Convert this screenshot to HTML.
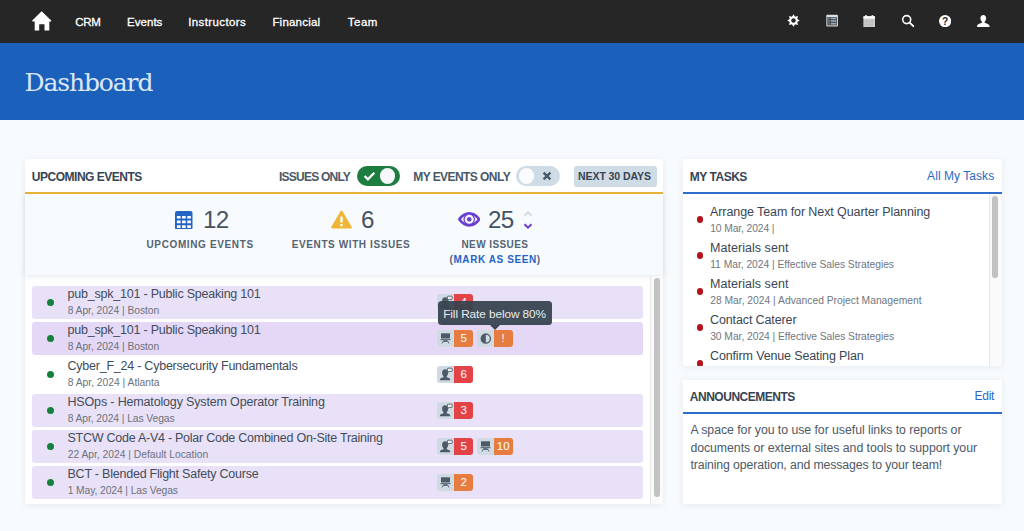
<!DOCTYPE html>
<html lang="en">
<head>
<meta charset="utf-8">
<title>Dashboard</title>
<style>
*{box-sizing:border-box;margin:0;padding:0}
html,body{width:1024px;height:531px;overflow:hidden}
body{background:#f8fbfd;font-family:"Liberation Sans",sans-serif;color:#2d3748;position:relative}
.abs,.x{position:absolute;white-space:nowrap}
svg{display:block}
#nav{position:absolute;left:0;top:0;width:1024px;height:43px;background:#262626}
#nav .item{position:absolute;top:15px;font-size:11.500px;line-height:14px;color:#fff;white-space:nowrap;-webkit-text-stroke:.3px #fff}
#nav svg{position:absolute}
#hero{position:absolute;left:0;top:43px;width:1024px;height:77px;background:#1b61bc}
#hero h1{position:absolute;left:24.500px;top:23px;font-family:"DejaVu Serif","Liberation Serif",serif;font-weight:normal;font-size:25px;line-height:34px;color:#dde8f7;white-space:nowrap}
.card{position:absolute;background:#fff;box-shadow:0 1px 7px rgba(60,100,150,.11);border-radius:2px}
.hd{position:absolute;left:0;top:0;right:0;height:34.500px;border-bottom:2px solid #2e6dca}
.ttl{position:absolute;top:10.500px;font-size:12px;line-height:14px;font-weight:bold;color:#364454;white-space:nowrap}
.ttl.l{color:#485868}
.lnk{position:absolute;top:9.500px;font-size:12px;line-height:15px;color:#2a69c6;white-space:nowrap}
#ev .hd{border-bottom-color:#efb636}
#stats{position:absolute;left:0;top:35px;width:638px;height:81px;background:#f8fbfd;box-shadow:0 1px 5px rgba(60,90,130,.16)}
.num{position:absolute;top:11.800px;font-size:24.200px;line-height:28px;color:#465362;white-space:nowrap}
.stl{position:absolute;font-size:10px;line-height:13px;font-weight:bold;color:#556373;white-space:nowrap}
.row{position:absolute;left:7px;width:611px;height:32.500px;background:#e9e1f8;border-radius:3px}
.row.hov{background:#e4d8f6}
.row.wh{background:#fff}
.row .dot{position:absolute;left:15px;top:13px;width:7px;height:7px;border-radius:50%;background:#15803d}
.row .t{position:absolute;left:35.500px;top:0px;font-size:12.500px;line-height:16px;color:#414d59;white-space:nowrap}
.row .s{position:absolute;left:35.700px;top:18.300px;font-size:10.300px;line-height:13px;color:#6c727c;white-space:nowrap}
.bdg{position:absolute;top:8px;height:17px;width:36px;border-radius:3px;overflow:hidden;background:#cfdae2}
.bdg .n{position:absolute;left:17.200px;top:0;right:0;height:17px;color:#fff;font-size:11.500px;line-height:17px;text-align:center}
.bdg .n.r{background:#e14347}
.bdg .n.o{background:#e67c40}
.bdg svg{position:absolute;left:0;top:0}
.task{position:absolute;left:0;width:300px;height:36px}
.task .dot{position:absolute;left:13.700px;top:12.200px;width:6.600px;height:6.600px;border-radius:50%;background:#b3151b}
.task .t{position:absolute;left:27px;top:0;font-size:12.500px;line-height:16px;color:#3a4654;white-space:nowrap}
.task .s{position:absolute;left:27.200px;top:18.200px;font-size:10.300px;line-height:13px;color:#6f7782;white-space:nowrap}
.ann{position:absolute;left:7.400px;font-size:12.300px;line-height:17px;color:#4d5966;white-space:nowrap}
#n1{letter-spacing:-0.334px}
#n2{letter-spacing:0.021px}
#n3{letter-spacing:0.383px}
#n4{letter-spacing:0.208px}
#n5{letter-spacing:0.494px}
#h1{letter-spacing:-1.111px}
#t1{letter-spacing:-0.484px}
#t2{letter-spacing:-0.772px}
#t3{letter-spacing:-0.557px}
#t4{letter-spacing:-0.070px}
#s1{letter-spacing:-0.803px}
#s2{letter-spacing:-2.253px}
#s3{letter-spacing:-0.803px}
#l1{letter-spacing:0.627px}
#l2{letter-spacing:0.595px}
#l3{letter-spacing:0.400px}
#l4{letter-spacing:0.586px}
#rt0{letter-spacing:-0.214px}
#rs0{letter-spacing:-0.053px}
#rt1{letter-spacing:-0.214px}
#rs1{letter-spacing:-0.053px}
#rt2{letter-spacing:-0.233px}
#rs2{letter-spacing:-0.005px}
#rt3{letter-spacing:-0.158px}
#rs3{letter-spacing:-0.074px}
#rt4{letter-spacing:-0.253px}
#rs4{letter-spacing:-0.005px}
#rt5{letter-spacing:-0.223px}
#rs5{letter-spacing:-0.095px}
#tip{letter-spacing:-0.077px}
#t5{letter-spacing:-0.476px}
#k1{letter-spacing:0.053px}
#kt0{letter-spacing:-0.087px}
#ks0{letter-spacing:-0.104px}
#kt1{letter-spacing:0.042px}
#ks1{letter-spacing:-0.027px}
#kt2{letter-spacing:0.042px}
#ks2{letter-spacing:-0.003px}
#kt3{letter-spacing:-0.116px}
#ks3{letter-spacing:-0.045px}
#kt4{letter-spacing:-0.136px}
#ks4{letter-spacing:0.004px}
#t6{letter-spacing:-0.480px}
#k2{letter-spacing:-0.247px}
#a1{letter-spacing:-0.044px}
#a2{letter-spacing:-0.048px}
#a3{letter-spacing:-0.114px}
</style>
</head>
<body>
<div id="nav">
  <svg style="left:30px;top:9px" width="24" height="24" viewBox="30 9 24 24"><path d="M41.600 11.200 L51.500 20.800 L50.900 21.500 H49.300 V30.400 H44.500 V24.200 H39.200 V30.400 H34.700 V21.500 H32.600 L32 20.800 Z" fill="#fff"/></svg>
  <span class="item" id="n1" style="left:75.200px">CRM</span>
  <span class="item" id="n2" style="left:127.100px">Events</span>
  <span class="item" id="n3" style="left:188.200px">Instructors</span>
  <span class="item" id="n4" style="left:272.400px">Financial</span>
  <span class="item" id="n5" style="left:347.800px">Team</span>
  <svg style="left:785.900px;top:13.100px" width="15" height="15" viewBox="-7.500 -7.500 15 15"><path fill="#fff" fill-rule="evenodd" d="M0.00 -6.20 L1.57 -3.79 L4.38 -4.38 L3.79 -1.57 L6.20 0.00 L3.79 1.57 L4.38 4.38 L1.57 3.79 L0.00 6.20 L-1.57 3.79 L-4.38 4.38 L-3.79 1.57 L-6.20 0.00 L-3.79 -1.57 L-4.38 -4.38 L-1.57 -3.79Z M2.3 0 A2.3 2.3 0 1 0 -2.3 0 A2.3 2.3 0 1 0 2.3 0Z"/></svg>
  <svg style="left:825.800px;top:14.200px" width="12.300" height="13.100" viewBox="0 0 13 13"><rect x=".3" y=".3" width="12.400" height="12.400" rx=".8" fill="#cfd2d5"/><rect x="1.400" y="2.600" width="10.200" height="9" fill="#454b52"/><rect x="1.400" y="1.200" width="10.200" height="1.200" fill="#f2f2f2"/><g fill="#9aa7b4"><rect x="5.300" y="3.400" width="5.600" height="1.700"/><rect x="5.300" y="6.200" width="5.600" height="1.700"/><rect x="5.300" y="9" width="5.600" height="1.700"/></g><g fill="#73797f"><rect x="2.100" y="3.400" width="2.500" height="1.700"/><rect x="2.100" y="6.200" width="2.500" height="1.700"/><rect x="2.100" y="9" width="2.500" height="1.700"/></g></svg>
  <svg style="left:863.200px;top:14.500px" width="12.400" height="12.600" viewBox="0 0 12.600 13"><rect x=".3" y="1.200" width="12" height="11.600" rx=".9" fill="#cdcdcd"/><rect x=".3" y="1.200" width="12" height="2.500" rx=".6" fill="#fff"/><rect x="2.100" y=".2" width="1.800" height="2" fill="#fff"/><rect x="8.700" y=".2" width="1.800" height="2" fill="#fff"/><path d="M.8 6.600H11.800M.8 9.500H11.800M3.500 4.200V12.400M6.300 4.200V12.400M9.100 4.200V12.400" stroke="#b2b2b2" stroke-width=".6"/></svg>
  <svg style="left:900.500px;top:14px" width="14" height="14" viewBox="0 0 14 14"><circle cx="5.700" cy="5.600" r="4" fill="none" stroke="#fff" stroke-width="1.600"/><path d="M8.700 8.600 L12.300 12.200" stroke="#fff" stroke-width="1.900" stroke-linecap="round"/></svg>
  <svg style="left:939.200px;top:14.600px" width="12.200" height="12.200" viewBox="0 0 12 12"><circle cx="6" cy="6" r="6" fill="#fff"/><text x="6" y="9.600" font-family="Liberation Sans, sans-serif" font-weight="bold" font-size="10" text-anchor="middle" fill="#262626">?</text></svg>
  <svg style="left:977px;top:14.600px" width="12.600" height="12.500" viewBox="0 0 13 13"><path fill="#fff" d="M6.500 0C4.600 0 3.500 1.400 3.500 3.300c0 1.600.7 3 1.600 3.700v1c-1.700.6-4.300 1.500-5 2.800V13h12.800v-2.200c-.7-1.300-3.300-2.200-5-2.800V7c.9-.7 1.600-2.100 1.600-3.700C9.500 1.400 8.400 0 6.500 0z"/></svg>
</div>
<div id="hero"><h1 id="h1">Dashboard</h1></div>

<div class="card" id="ev" style="left:25px;top:159px;width:638px;height:345px">
  <div class="hd"><span class="ttl" id="t1" style="left:6.800px">UPCOMING EVENTS</span>
    <span class="ttl l" id="t2" style="left:254px">ISSUES ONLY</span>
    <div class="abs" style="left:331.600px;top:6.700px;width:43.100px;height:20.800px;border-radius:11px;background:#1d7d41"></div>
    <div class="abs" style="left:354.900px;top:9.200px;width:15.600px;height:15.600px;border-radius:50%;background:#f6f7f9"></div>
    <svg class="abs" style="left:337.800px;top:12.200px" width="13" height="11" viewBox="0 0 13 11"><path d="M1.600 5 L4.900 8.300 L11.300 1.700" fill="none" stroke="#fff" stroke-width="2.300"/></svg>
    <span class="ttl l" id="t3" style="left:388.200px">MY EVENTS ONLY</span>
    <div class="abs" style="left:491.300px;top:6.700px;width:43.400px;height:20.800px;border-radius:11px;background:#cfdbe5"></div>
    <div class="abs" style="left:493.900px;top:9.200px;width:15.600px;height:15.600px;border-radius:50%;background:#fafbfc"></div>
    <svg class="abs" style="left:516.600px;top:12px" width="10" height="10" viewBox="0 0 10 10"><path d="M1.600 1.600 L8.400 8.400 M8.400 1.600 L1.600 8.400" stroke="#4a5a6b" stroke-width="2.500"/></svg>
    <div class="abs" style="left:548.500px;top:7px;width:83px;height:20.500px;border-radius:3px;background:#cfdbe5"></div>
    <span class="abs" id="t4" style="left:553px;top:7px;font-size:10.500px;line-height:20.500px;font-weight:bold;color:#364454">NEXT 30 DAYS</span>
  </div>
  <div id="stats">
    <svg class="abs" style="left:150.100px;top:16.500px" width="17.500" height="18.600" viewBox="0 0 17.500 18.600"><rect x="0" y="0" width="17.500" height="18.600" rx="2" fill="#2464c4"/><g fill="#fff"><rect x="1.9" y="4.9" width="3.700" height="2.600" rx=".3"/><rect x="1.9" y="9.6" width="3.700" height="2.600" rx=".3"/><rect x="1.9" y="14.3" width="3.700" height="2.600" rx=".3"/><rect x="7.0" y="4.9" width="3.700" height="2.600" rx=".3"/><rect x="7.0" y="9.6" width="3.700" height="2.600" rx=".3"/><rect x="7.0" y="14.3" width="3.700" height="2.600" rx=".3"/><rect x="12.2" y="4.9" width="3.700" height="2.600" rx=".3"/><rect x="12.2" y="9.6" width="3.700" height="2.600" rx=".3"/><rect x="12.2" y="14.3" width="3.700" height="2.600" rx=".3"/></g></svg>
    <span class="num" id="s1" style="left:178px">12</span>
    <span class="stl" id="l1" style="left:121.500px;top:44px">UPCOMING EVENTS</span>
    <svg class="abs" style="left:306.200px;top:16.300px" width="21" height="19.200" viewBox="0 0 23 20"><path d="M11.500 1.500 L21.500 18.500 H1.500 Z" fill="#efb636" stroke="#efb636" stroke-width="2.600" stroke-linejoin="round"/><rect x="10.200" y="6.500" width="2.600" height="6.800" rx=".6" fill="#fff"/><rect x="10.200" y="14.800" width="2.600" height="2.600" rx=".6" fill="#fff"/></svg>
    <span class="num" id="s2" style="left:336px">6</span>
    <span class="stl" id="l2" style="left:266.800px;top:44px">EVENTS WITH ISSUES</span>
    <svg class="abs" style="left:432.700px;top:18.300px" width="22.500" height="14.700" viewBox="0 0 23 15"><path d="M1.350 7.500 C4.500 3 8 1.350 11.500 1.350 S18.500 3 21.650 7.500 C18.500 12 15 13.650 11.500 13.650 S4.500 12 1.350 7.500Z" fill="#f7fafc" stroke="#6a3fcf" stroke-width="2.700" stroke-linejoin="round"/><circle cx="11.500" cy="7.500" r="5.900" fill="#6a3fcf"/><circle cx="11.500" cy="7.500" r="4.600" fill="#f7fafc"/><circle cx="11.500" cy="7.500" r="2.350" fill="#6a3fcf"/></svg>
    <span class="num" id="s3" style="left:463px">25</span>
    <svg class="abs" style="left:498px;top:16.500px" width="10" height="20" viewBox="0 0 10 20"><path d="M1.500 4.700 L5 1.300 L8.500 4.700" fill="none" stroke="#d0d8e1" stroke-width="1.700"/><path d="M1.500 13.200 L5 16.700 L8.500 13.200" fill="none" stroke="#6a3fcf" stroke-width="2"/></svg>
    <span class="stl" id="l3" style="left:436.500px;top:44px">NEW ISSUES</span>
    <span class="stl" id="l4" style="left:424.500px;top:58.500px">(<span style="color:#2464c4">MARK AS SEEN</span>)</span>
  </div>
  <div id="list" style="position:absolute;left:0;top:117px;width:638px;height:228px;overflow:hidden">

    <div class="row " style="top:10px"><i class="dot"></i><span class="t" id="rt0">pub_spk_101 - Public Speaking 101</span><span class="s" id="rs0">8 Apr, 2024 | Boston</span>
      <div class="bdg" style="left:405px"><svg width="17" height="17" viewBox="0 0 17 17"><path d="M2.900 14.200c0-1.600 1.200-2.200 3.600-2.900v-1c-.9-.7-1.400-2-1.400-3.500 0-2.200 1.200-3.600 3-3.600s3 1.400 3 3.600c0 1.500-.5 2.800-1.400 3.500v1c2.400.7 3.600 1.300 3.600 2.900z" fill="#4c5a68"/><path d="M10.900 2.200h3.800c.3 0 .5.200.5.500v2.200c0 .3-.2.500-.5.500h-2.500l-1.400 1.100.3-1.100h-.2c-.3 0-.5-.2-.5-.5V2.700c0-.3.200-.5.500-.5z" fill="#f4f6f8" stroke="#4c5a68" stroke-width=".9"/></svg><div class="n r">4</div></div>
    </div>
    <div class="row hov" style="top:46px"><i class="dot"></i><span class="t" id="rt1">pub_spk_101 - Public Speaking 101</span><span class="s" id="rs1">8 Apr, 2024 | Boston</span>
      <div class="bdg" style="left:405px"><svg width="17" height="17" viewBox="0 0 17 17"><rect x="4" y="3.300" width="9" height="5.200" fill="#4c5a68"/><rect x="3.500" y="9.200" width="10" height="1" fill="#4c5a68"/><path d="M5 13.400 L6.700 10.800 H10.300 L12 13.400 M6.700 11.300 H10.300" fill="none" stroke="#4c5a68" stroke-width="1"/></svg><div class="n o">5</div></div>
      <div class="bdg" style="left:444.6px"><svg width="17" height="17" viewBox="0 0 17 17"><circle cx="8.800" cy="8.600" r="4.600" fill="none" stroke="#4c5a68" stroke-width="1.300"/><path d="M8.800 4 A4.600 4.600 0 0 0 8.800 13.200 Z" fill="#4c5a68"/></svg><div class="n o">!</div></div>
    </div>
    <div class="row wh" style="top:82px"><i class="dot"></i><span class="t" id="rt2">Cyber_F_24 - Cybersecurity Fundamentals</span><span class="s" id="rs2">8 Apr, 2024 | Atlanta</span>
      <div class="bdg" style="left:405px"><svg width="17" height="17" viewBox="0 0 17 17"><path d="M2.900 14.200c0-1.600 1.200-2.200 3.600-2.900v-1c-.9-.7-1.400-2-1.400-3.500 0-2.200 1.200-3.600 3-3.600s3 1.400 3 3.600c0 1.500-.5 2.800-1.400 3.500v1c2.400.7 3.600 1.300 3.600 2.900z" fill="#4c5a68"/><path d="M10.900 2.200h3.800c.3 0 .5.200.5.500v2.200c0 .3-.2.500-.5.500h-2.500l-1.400 1.100.3-1.100h-.2c-.3 0-.5-.2-.5-.5V2.700c0-.3.200-.5.500-.5z" fill="#f4f6f8" stroke="#4c5a68" stroke-width=".9"/></svg><div class="n r">6</div></div>
    </div>
    <div class="row " style="top:118px"><i class="dot"></i><span class="t" id="rt3">HSOps - Hematology System Operator Training</span><span class="s" id="rs3">8 Apr, 2024 | Las Vegas</span>
      <div class="bdg" style="left:405px"><svg width="17" height="17" viewBox="0 0 17 17"><path d="M2.900 14.200c0-1.600 1.200-2.200 3.600-2.900v-1c-.9-.7-1.400-2-1.400-3.500 0-2.200 1.200-3.600 3-3.600s3 1.400 3 3.600c0 1.500-.5 2.800-1.400 3.500v1c2.400.7 3.600 1.300 3.600 2.900z" fill="#4c5a68"/><path d="M10.900 2.200h3.800c.3 0 .5.200.5.500v2.200c0 .3-.2.500-.5.500h-2.500l-1.400 1.100.3-1.100h-.2c-.3 0-.5-.2-.5-.5V2.700c0-.3.200-.5.500-.5z" fill="#f4f6f8" stroke="#4c5a68" stroke-width=".9"/></svg><div class="n r">3</div></div>
    </div>
    <div class="row " style="top:154px"><i class="dot"></i><span class="t" id="rt4">STCW Code A-V4 - Polar Code Combined On-Site Training</span><span class="s" id="rs4">22 Apr, 2024 | Default Location</span>
      <div class="bdg" style="left:405px"><svg width="17" height="17" viewBox="0 0 17 17"><path d="M2.900 14.200c0-1.600 1.200-2.200 3.600-2.900v-1c-.9-.7-1.400-2-1.400-3.500 0-2.200 1.200-3.600 3-3.600s3 1.400 3 3.600c0 1.500-.5 2.800-1.400 3.500v1c2.400.7 3.600 1.300 3.600 2.900z" fill="#4c5a68"/><path d="M10.900 2.200h3.800c.3 0 .5.200.5.500v2.200c0 .3-.2.500-.5.500h-2.500l-1.400 1.100.3-1.100h-.2c-.3 0-.5-.2-.5-.5V2.700c0-.3.200-.5.500-.5z" fill="#f4f6f8" stroke="#4c5a68" stroke-width=".9"/></svg><div class="n r">5</div></div>
      <div class="bdg" style="left:444.6px"><svg width="17" height="17" viewBox="0 0 17 17"><rect x="4" y="3.300" width="9" height="5.200" fill="#4c5a68"/><rect x="3.500" y="9.200" width="10" height="1" fill="#4c5a68"/><path d="M5 13.400 L6.700 10.800 H10.300 L12 13.400 M6.700 11.300 H10.300" fill="none" stroke="#4c5a68" stroke-width="1"/></svg><div class="n o">10</div></div>
    </div>
    <div class="row " style="top:190px"><i class="dot"></i><span class="t" id="rt5">BCT - Blended Flight Safety Course</span><span class="s" id="rs5">1 May, 2024 | Las Vegas</span>
      <div class="bdg" style="left:405px"><svg width="17" height="17" viewBox="0 0 17 17"><rect x="4" y="3.300" width="9" height="5.200" fill="#4c5a68"/><rect x="3.500" y="9.200" width="10" height="1" fill="#4c5a68"/><path d="M5 13.400 L6.700 10.800 H10.300 L12 13.400 M6.700 11.300 H10.300" fill="none" stroke="#4c5a68" stroke-width="1"/></svg><div class="n o">2</div></div>
    </div>
    <div class="abs" style="left:625.200px;top:0;width:12.800px;height:228px;background:#fafafa;border-left:1px solid #e9e9e9"></div>
    <div class="abs" style="left:628.900px;top:2px;width:6.500px;height:219px;border-radius:3.500px;background:#c2c2c2"></div>
  </div>
  <div class="abs" style="left:413px;top:142.200px;width:113.500px;height:24px;border-radius:3.500px;background:rgba(56,68,80,.95)"></div>
  <span class="abs" id="tip" style="left:418.200px;top:143.600px;font-size:11.800px;line-height:22px;color:#e8ebee">Fill Rate below 80%</span>
  <div class="abs" style="left:464.500px;top:166.100px;width:0;height:0;border-left:5.500px solid transparent;border-right:5.500px solid transparent;border-top:5px solid #3b4753"></div>
</div>

<div class="card" id="tasks" style="left:683px;top:159px;width:318.800px;height:207px;overflow:hidden">
  <div class="hd"><span class="ttl" id="t5" style="left:6.800px">MY TASKS</span><span class="lnk" id="k1" style="right:7.600px">All My Tasks</span></div>
  <div style="position:absolute;left:0;top:35px;width:318.800px;height:172px;overflow:hidden">

    <div class="task" style="top:10px"><i class="dot"></i><span class="t" id="kt0">Arrange Team for Next Quarter Planning</span><span class="s" id="ks0">10 Mar, 2024 |</span></div>
    <div class="task" style="top:46px"><i class="dot"></i><span class="t" id="kt1">Materials sent</span><span class="s" id="ks1">11 Mar, 2024 | Effective Sales Strategies</span></div>
    <div class="task" style="top:82px"><i class="dot"></i><span class="t" id="kt2">Materials sent</span><span class="s" id="ks2">28 Mar, 2024 | Advanced Project Management</span></div>
    <div class="task" style="top:118px"><i class="dot"></i><span class="t" id="kt3">Contact Caterer</span><span class="s" id="ks3">30 Mar, 2024 | Effective Sales Strategies</span></div>
    <div class="task" style="top:154px"><i class="dot"></i><span class="t" id="kt4">Confirm Venue Seating Plan</span><span class="s" id="ks4">2 Apr, 2024 | Effective Sales Strategies</span></div>
    <div class="abs" style="left:306px;top:0;width:12.800px;height:172px;background:#fafafa;border-left:1px solid #e9e9e9"></div>
    <div class="abs" style="left:308.500px;top:2px;width:6.800px;height:82px;border-radius:3.500px;background:#c2c2c2"></div>
  </div>
</div>
<div class="card" id="ann" style="left:683px;top:379.700px;width:318.800px;height:124px">
  <div class="hd"><span class="ttl" id="t6" style="left:6.800px">ANNOUNCEMENTS</span><span class="lnk" id="k2" style="right:7.600px">Edit</span></div>
  <span class="ann" id="a1" style="top:42.600px">A space for you to use for useful links to reports or</span>
  <span class="ann" id="a2" style="top:60px">documents or external sites and tools to support your</span>
  <span class="ann" id="a3" style="top:77.400px">training operation, and messages to your team!</span>
</div>
</body>
</html>
